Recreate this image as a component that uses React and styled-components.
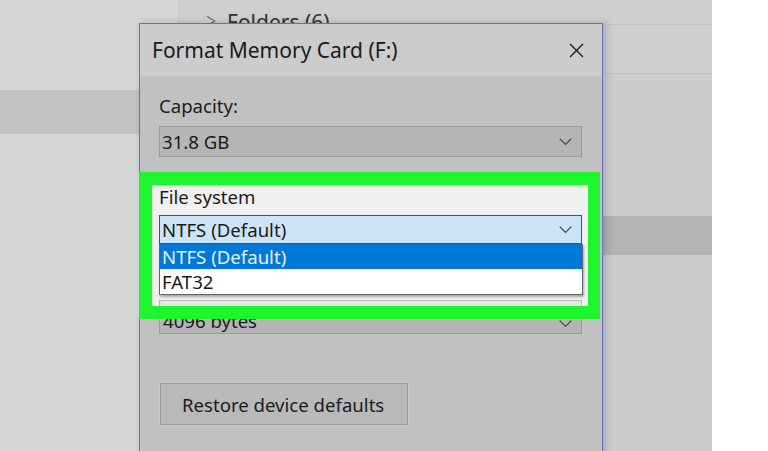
import React from 'react';
import styled, { createGlobalStyle } from 'styled-components';

const Global = createGlobalStyle`
  html, body {
    margin: 0;
    padding: 0;
    width: 768px;
    height: 451px;
    overflow: hidden;
    font-family: "Noto Sans", "Open Sans", sans-serif;
    color: #1a1a1a;
  }
`;

const Desktop = styled.div`
  position: relative;
  display: flex;
  width: 768px;
  height: 451px;
  overflow: hidden;
`;

const LeftPane = styled.div`
  width: 178px;
  background: #d6d6d6;
  border-right: 1px solid #cbcbcb;
  display: flex;
  flex-direction: column;
`;

const Band = styled.div`
  height: ${p => p.h}px;
  margin-top: ${p => p.top}px;
  background: ${p => p.bg};
`;

const RightPane = styled.div`
  width: 533px;
  background: #cdcdcd;
  display: flex;
  flex-direction: column;
`;

const HeaderRow = styled.div`
  height: ${p => p.h}px;
  border-bottom: 1px solid #c2c2c2;
  background: #cfcfcf;
  display: flex;
  align-items: flex-start;
  gap: 10px;
  padding-left: 26px;
  overflow: hidden;
`;

const FolderText = styled.span`
  font-size: 21px;
  line-height: 21px;
  margin-top: 12px;
  color: #333;
`;

const FolderChevron = styled.span`
  font-size: 21px;
  line-height: 21px;
  margin-top: 11px;
  color: #555;
  font-weight: 300;
  transform: scaleX(0.8);
`;

const WhiteStrip = styled.div`
  flex: 1;
  background: #ffffff;
`;

const Dialog = styled.div`
  position: absolute;
  left: 139px;
  top: 23px;
  width: 462px;
  height: 440px;
  border: 1px solid #6070c4;
  background: #c1c1c1;
  box-shadow: 3px 0 8px rgba(0, 0, 0, 0.18);
  display: flex;
  flex-direction: column;
`;

const TitleBar = styled.div`
  height: 52px;
  background: #cccccc;
  display: flex;
  align-items: center;
  justify-content: space-between;
  padding: 0 18px 0 12px;
`;

const Title = styled.div`
  font-size: 21px;
  color: #1a1a1a;
`;

const Body = styled.div`
  display: flex;
  flex-direction: column;
  align-items: flex-start;
  padding: 18px 0 0 19px;
`;

const Label = styled.div`
  font-size: 18.6px;
  line-height: 24px;
  color: #1c1c1c;
`;

const Field = styled.div`
  box-sizing: border-box;
  width: 423px;
  height: ${p => p.h}px;
  margin-top: ${p => p.mt || 0}px;
  background: ${p => p.bg};
  border: 1px solid ${p => p.bd};
  display: flex;
  align-items: center;
  justify-content: space-between;
  padding: 0 9px 0 2px;
  font-size: 18.6px;
`;

const Highlight = styled.div`
  box-sizing: border-box;
  width: 461px;
  margin: 15px 0 0 -20px;
  border-style: solid;
  border-color: #1df52c;
  border-width: 13px 12px 13px 13px;
  background: #f0f0f0;
  padding: 0 0 0 7px;
  display: flex;
  flex-direction: column;
`;

const ListBox = styled.div`
  box-sizing: border-box;
  width: 424px;
  border: 1px solid #646464;
  border-top: none;
  background: #ffffff;
  box-shadow: 1px 2px 2px rgba(0, 0, 0, 0.3);
`;

const Option = styled.div`
  height: 25px;
  line-height: 25px;
  padding-left: 2px;
  font-size: 18.6px;
  background: ${p => (p.selected ? '#0078d7' : '#ffffff')};
  color: ${p => (p.selected ? '#e6f0fa' : '#1a1a1a')};
`;

const Sliver = styled.div`
  box-sizing: border-box;
  width: 423px;
  height: 6px;
  margin-top: 5px;
  border: 1px solid #b8b8b8;
  border-bottom: none;
  background: #e6e6e6;
`;

const CutField = styled.div`
  box-sizing: border-box;
  width: 423px;
  height: 15px;
  background: #b5b5b5;
  border: 1px solid #9a9a9a;
  border-top: none;
  overflow: hidden;
  display: flex;
  justify-content: space-between;
  padding: 0 9px 0 3px;
  font-size: 18.6px;
  line-height: 24px;
`;

const CutInner = styled.span`
  display: block;
  margin-top: -10px;
`;

const Button = styled.div`
  box-sizing: border-box;
  margin-top: 49px;
  margin-left: 1px;
  width: 248px;
  height: 42px;
  background: #b9b9b9;
  border: 1px solid #999999;
  outline: 1px solid #cacaca;
  display: flex;
  align-items: center;
  padding-left: 21px;
  font-size: 18.6px;
  color: #1c1c1c;
`;

const Chevron = ({ color = '#444' }) => (
  <svg width="13" height="8" viewBox="0 0 13 8">
    <path d="M0.7 0.7 L6.5 6.5 L12.3 0.7" fill="none" stroke={color} strokeWidth="1.2" />
  </svg>
);

const CloseIcon = () => (
  <svg width="15" height="15" viewBox="0 0 15 15">
    <path d="M1 1 L14 14 M14 1 L1 14" stroke="#1a1a1a" strokeWidth="1.4" />
  </svg>
);

export default function App() {
  return (
    <>
      <Global />
      <Desktop>
        <LeftPane>
          <Band top={90} h={44} bg="#c2c2c2" />
        </LeftPane>
        <RightPane>
          <HeaderRow h={24}>
            <FolderChevron>&gt;</FolderChevron>
            <FolderText>Folders (6)</FolderText>
          </HeaderRow>
          <HeaderRow h={48} />
          <Band top={142} h={39} bg="#b3b3b3" />
        </RightPane>
        <WhiteStrip />

        <Dialog>
          <TitleBar>
            <Title>Format Memory Card (F:)</Title>
            <CloseIcon />
          </TitleBar>
          <Body>
            <Label>Capacity:</Label>
            <Field h={31} mt={8} bg="#b5b5b5" bd="#9a9a9a">
              <span>31.8 GB</span>
              <Chevron />
            </Field>

            <Highlight>
              <Label>File system</Label>
              <Field h={29} mt={6} bg="#cce4f7" bd="#3f5375">
                <span>NTFS (Default)</span>
                <Chevron />
              </Field>
              <ListBox>
                <Option selected>NTFS (Default)</Option>
                <Option>FAT32</Option>
              </ListBox>
              <Sliver />
            </Highlight>

            <CutField>
              <CutInner>4096 bytes</CutInner>
              <CutInner>
                <Chevron />
              </CutInner>
            </CutField>

            <Button>Restore device defaults</Button>
          </Body>
        </Dialog>
      </Desktop>
    </>
  );
}
